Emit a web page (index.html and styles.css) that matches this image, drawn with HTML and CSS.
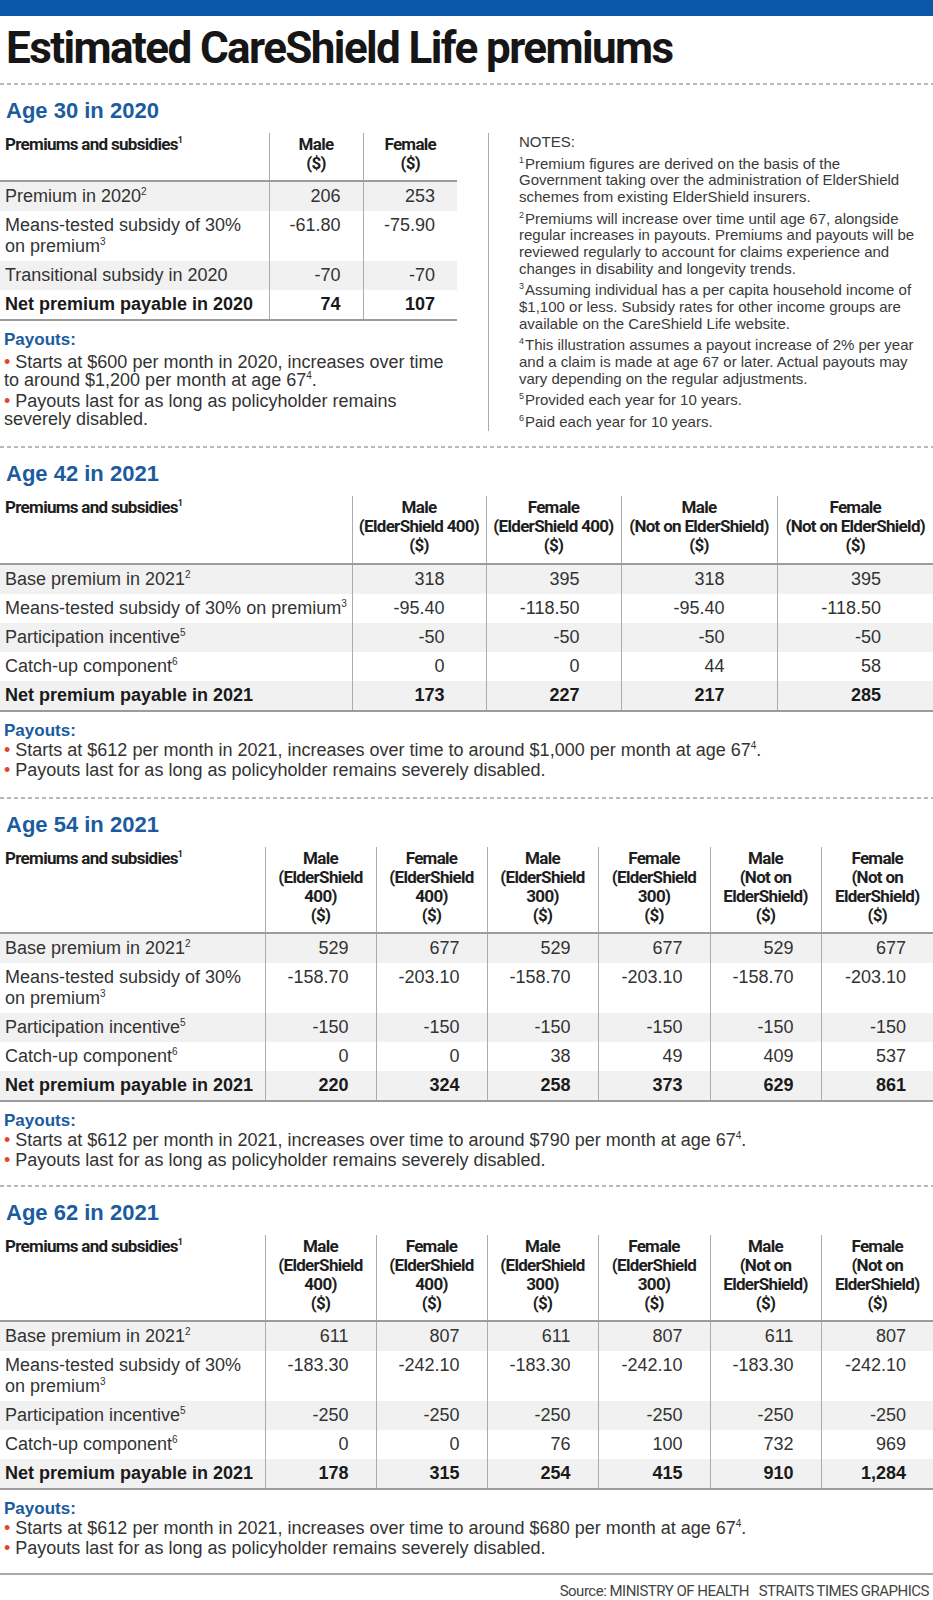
FILE: index.html
```html
<!DOCTYPE html>
<html lang="en">
<head>
<meta charset="utf-8">
<title>Estimated CareShield Life premiums</title>
<link rel="stylesheet" href="styles.css">
</head>
<body>
<div class="topbar"></div>
<h1 class="title">Estimated CareShield Life premiums</h1>

<section class="sec sec-first">
  <h2 class="age">Age 30 in 2020</h2>
  <div class="sec1-body">
    <div class="sec1-main">
      <table class="tbl t30">
        <colgroup><col class="w269"><col class="w94"><col class="w94"></colgroup>
        <thead>
          <tr><th class="lab">Premiums and subsidies<sup>1</sup></th><th>Male<br>($)</th><th>Female<br>($)</th></tr>
        </thead>
        <tbody>
          <tr><td class="lab">Premium in 2020<sup>2</sup></td><td class="num">206</td><td class="num">253</td></tr>
          <tr><td class="lab">Means-tested subsidy of 30% on premium<sup>3</sup></td><td class="num">-61.80</td><td class="num">-75.90</td></tr>
          <tr><td class="lab">Transitional subsidy in 2020</td><td class="num">-70</td><td class="num">-70</td></tr>
          <tr class="net"><td class="lab">Net premium payable in 2020</td><td class="num">74</td><td class="num">107</td></tr>
        </tbody>
      </table>
      <div class="payouts payouts-narrow">
        <p class="ph">Payouts:</p>
        <p><span class="dot">•</span> Starts at $600 per month in 2020, increases over time to around $1,200 per month at age 67<sup>4</sup>.</p>
        <p><span class="dot">•</span> Payouts last for as long as policyholder remains severely disabled.</p>
      </div>
    </div>
    <div class="notes">
      <p>NOTES:</p>
      <p><sup>1</sup>Premium figures are derived on the basis of the Government taking over the administration of ElderShield schemes from existing ElderShield insurers.</p>
      <p><sup>2</sup>Premiums will increase over time until age 67, alongside regular increases in payouts. Premiums and payouts will be reviewed regularly to account for claims experience and changes in disability and longevity trends.</p>
      <p><sup>3</sup>Assuming individual has a per capita household income of $1,100 or less. Subsidy rates for other income groups are available on the CareShield Life website.</p>
      <p><sup>4</sup>This illustration assumes a payout increase of 2% per year and a claim is made at age 67 or later. Actual payouts may vary depending on the regular adjustments.</p>
      <p><sup>5</sup>Provided each year for 10 years.</p>
      <p><sup>6</sup>Paid each year for 10 years.</p>
    </div>
  </div>
</section>

<section class="sec sec-second">
  <h2 class="age">Age 42 in 2021</h2>
  <table class="tbl t42">
    <colgroup><col class="w352"><col class="w134"><col class="w135"><col class="w156"><col class="w156"></colgroup>
    <thead>
      <tr><th class="lab">Premiums and subsidies<sup>1</sup></th><th>Male<br>(ElderShield 400)<br>($)</th><th>Female<br>(ElderShield 400)<br>($)</th><th>Male<br>(Not on ElderShield)<br>($)</th><th>Female<br>(Not on ElderShield)<br>($)</th></tr>
    </thead>
    <tbody>
      <tr><td class="lab">Base premium in 2021<sup>2</sup></td><td class="num">318</td><td class="num">395</td><td class="num">318</td><td class="num">395</td></tr>
      <tr><td class="lab">Means-tested subsidy of 30% on premium<sup>3</sup></td><td class="num">-95.40</td><td class="num">-118.50</td><td class="num">-95.40</td><td class="num">-118.50</td></tr>
      <tr><td class="lab">Participation incentive<sup>5</sup></td><td class="num">-50</td><td class="num">-50</td><td class="num">-50</td><td class="num">-50</td></tr>
      <tr><td class="lab">Catch-up component<sup>6</sup></td><td class="num">0</td><td class="num">0</td><td class="num">44</td><td class="num">58</td></tr>
      <tr class="net"><td class="lab">Net premium payable in 2021</td><td class="num">173</td><td class="num">227</td><td class="num">217</td><td class="num">285</td></tr>
    </tbody>
  </table>
  <div class="payouts">
    <p class="ph">Payouts:</p>
    <p><span class="dot">•</span> Starts at $612 per month in 2021, increases over time to around $1,000 per month at age 67<sup>4</sup>.</p>
    <p><span class="dot">•</span> Payouts last for as long as policyholder remains severely disabled.</p>
  </div>
</section>

<section class="sec">
  <h2 class="age">Age 54 in 2021</h2>
  <table class="tbl t6">
    <colgroup><col class="w265"><col class="w111"><col class="w111"><col class="w111"><col class="w112"><col class="w111"><col class="w112"></colgroup>
    <thead>
      <tr><th class="lab">Premiums and subsidies<sup>1</sup></th><th>Male<br>(ElderShield<br>400)<br>($)</th><th>Female<br>(ElderShield<br>400)<br>($)</th><th>Male<br>(ElderShield<br>300)<br>($)</th><th>Female<br>(ElderShield<br>300)<br>($)</th><th>Male<br>(Not on<br>ElderShield)<br>($)</th><th>Female<br>(Not on<br>ElderShield)<br>($)</th></tr>
    </thead>
    <tbody>
      <tr><td class="lab">Base premium in 2021<sup>2</sup></td><td class="num">529</td><td class="num">677</td><td class="num">529</td><td class="num">677</td><td class="num">529</td><td class="num">677</td></tr>
      <tr><td class="lab">Means-tested subsidy of 30% on premium<sup>3</sup></td><td class="num">-158.70</td><td class="num">-203.10</td><td class="num">-158.70</td><td class="num">-203.10</td><td class="num">-158.70</td><td class="num">-203.10</td></tr>
      <tr><td class="lab">Participation incentive<sup>5</sup></td><td class="num">-150</td><td class="num">-150</td><td class="num">-150</td><td class="num">-150</td><td class="num">-150</td><td class="num">-150</td></tr>
      <tr><td class="lab">Catch-up component<sup>6</sup></td><td class="num">0</td><td class="num">0</td><td class="num">38</td><td class="num">49</td><td class="num">409</td><td class="num">537</td></tr>
      <tr class="net"><td class="lab">Net premium payable in 2021</td><td class="num">220</td><td class="num">324</td><td class="num">258</td><td class="num">373</td><td class="num">629</td><td class="num">861</td></tr>
    </tbody>
  </table>
  <div class="payouts">
    <p class="ph">Payouts:</p>
    <p><span class="dot">•</span> Starts at $612 per month in 2021, increases over time to around $790 per month at age 67<sup>4</sup>.</p>
    <p><span class="dot">•</span> Payouts last for as long as policyholder remains severely disabled.</p>
  </div>
</section>

<section class="sec">
  <h2 class="age">Age 62 in 2021</h2>
  <table class="tbl t6">
    <colgroup><col class="w265"><col class="w111"><col class="w111"><col class="w111"><col class="w112"><col class="w111"><col class="w112"></colgroup>
    <thead>
      <tr><th class="lab">Premiums and subsidies<sup>1</sup></th><th>Male<br>(ElderShield<br>400)<br>($)</th><th>Female<br>(ElderShield<br>400)<br>($)</th><th>Male<br>(ElderShield<br>300)<br>($)</th><th>Female<br>(ElderShield<br>300)<br>($)</th><th>Male<br>(Not on<br>ElderShield)<br>($)</th><th>Female<br>(Not on<br>ElderShield)<br>($)</th></tr>
    </thead>
    <tbody>
      <tr><td class="lab">Base premium in 2021<sup>2</sup></td><td class="num">611</td><td class="num">807</td><td class="num">611</td><td class="num">807</td><td class="num">611</td><td class="num">807</td></tr>
      <tr><td class="lab">Means-tested subsidy of 30% on premium<sup>3</sup></td><td class="num">-183.30</td><td class="num">-242.10</td><td class="num">-183.30</td><td class="num">-242.10</td><td class="num">-183.30</td><td class="num">-242.10</td></tr>
      <tr><td class="lab">Participation incentive<sup>5</sup></td><td class="num">-250</td><td class="num">-250</td><td class="num">-250</td><td class="num">-250</td><td class="num">-250</td><td class="num">-250</td></tr>
      <tr><td class="lab">Catch-up component<sup>6</sup></td><td class="num">0</td><td class="num">0</td><td class="num">76</td><td class="num">100</td><td class="num">732</td><td class="num">969</td></tr>
      <tr class="net"><td class="lab">Net premium payable in 2021</td><td class="num">178</td><td class="num">315</td><td class="num">254</td><td class="num">415</td><td class="num">910</td><td class="num">1,284</td></tr>
    </tbody>
  </table>
  <div class="payouts">
    <p class="ph">Payouts:</p>
    <p><span class="dot">•</span> Starts at $612 per month in 2021, increases over time to around $680 per month at age 67<sup>4</sup>.</p>
    <p><span class="dot">•</span> Payouts last for as long as policyholder remains severely disabled.</p>
  </div>
</section>

<footer class="source">Source: MINISTRY OF HEALTH&nbsp;&nbsp; STRAITS TIMES GRAPHICS</footer>
</body>
</html>
```

FILE: styles.css
```css
body {
  margin: 0;
  width: 933px;
  background: #fff;
  color: #333;
  font-family: "Liberation Sans", Arial, sans-serif;
}

.topbar {
  height: 16px;
  background: #0a58a7;
}

.title {
  margin: 6px 0 9px 6px;
  font-family: Roboto, "Liberation Sans", sans-serif;
  font-weight: bold;
  font-size: 44px;
  line-height: 52px;
  color: #161616;
  letter-spacing: -1.6px;
}

.sec {
  padding: 15px 0 16px;
  background: repeating-linear-gradient(90deg, #b9b9b9 0 4px, transparent 4px 7px) top left / 100% 2px no-repeat;
}
.sec-first { padding-bottom: 15px; }
.sec-second { padding-bottom: 18px; }

.age {
  margin: 0 0 9px 6px;
  font-size: 22px;
  line-height: 26px;
  font-weight: bold;
  color: #1b5c9f;
}

.sec1-body {
  display: flex;
  align-items: flex-start;
}

.sec1-main {
  width: 457px;
}

/* tables */
.tbl {
  border-collapse: collapse;
  table-layout: fixed;
}
.t30 { width: 457px; }
.t42, .t6 { width: 933px; }

.w269 { width: 269px; }
.w94 { width: 94px; }
.w352 { width: 352px; }
.w134 { width: 134px; }
.w135 { width: 135px; }
.w156 { width: 156px; }
.w265 { width: 265px; }
.w111 { width: 111px; }
.w112 { width: 112px; }

.tbl th {
  font-family: Roboto, "Liberation Sans", sans-serif;
  font-weight: bold;
  font-size: 17px;
  line-height: 19px;
  letter-spacing: -0.7px;
  color: #1e1e1e;
  text-align: center;
  vertical-align: top;
  padding: 2px 2px 7px;
  border-left: 1px solid #ababab;
  border-bottom: 2px solid #9c9c9c;
}
.tbl th.lab {
  text-align: left;
  padding-left: 5px;
  border-left: none;
}
.t42 th { padding-bottom: 8px; }

.tbl td {
  font-size: 18px;
  line-height: 21px;
  padding: 4px 0;
  vertical-align: top;
  border-left: 1px solid #ababab;
  color: #333;
}
.tbl td.lab {
  padding-left: 5px;
  padding-right: 12px;
  border-left: none;
}
.t42 td.lab { white-space: nowrap; padding-right: 0; }
.tbl tr.net td.lab { white-space: nowrap; padding-right: 0; }
.tbl td.num { text-align: right; }
.t30 td.num { padding-right: 22px; }
.t42 td.num { padding-right: 41px; }
.t42 td.num:nth-child(n+4) { padding-right: 52px; }
.t6 td.num { padding-right: 27px; }

.tbl tbody tr:nth-child(odd) { background: #f1f1f1; }
.tbl tbody tr:last-child { border-bottom: 2px solid #9c9c9c; }
.tbl tr.net td { font-weight: bold; color: #1a1a1a; }

sup {
  font-size: 10px;
  line-height: 0;
  vertical-align: 7px;
}
th sup { font-size: 9px; letter-spacing: 0; }

/* payouts */
.payouts {
  margin-top: 10px;
  font-size: 18px;
  line-height: 18px;
  color: #333;
}
.payouts-narrow { width: 452px; }
.payouts p {
  margin: 1.5px 0 0 4px;
}
.payouts-narrow p { margin-top: 3.5px; }
.payouts p.ph {
  margin: 0 0 0 4px;
  font-size: 17px;
  line-height: 18px;
  font-weight: bold;
  color: #1b5c9f;
}
.dot {
  color: #e1472d;
}

/* notes */
.notes {
  margin-left: 31px;
  padding: 1px 0 0 30px;
  width: 400px;
  border-left: 1px solid #ababab;
  font-size: 15px;
  line-height: 16.67px;
  color: #3a3a3a;
}
.notes p {
  margin: 0 0 5px;
}
.notes p:last-child { margin-bottom: 0; }
.notes sup {
  font-size: 9px;
  vertical-align: 6px;
  margin-right: 1px;
}

.source {
  border-top: 2px solid #a9a9a9;
  text-align: right;
  padding: 7px 4px 0;
  font-family: Roboto, "Liberation Sans", sans-serif;
  font-size: 15px;
  line-height: 18px;
  letter-spacing: -0.5px;
  color: #444;
}
```
